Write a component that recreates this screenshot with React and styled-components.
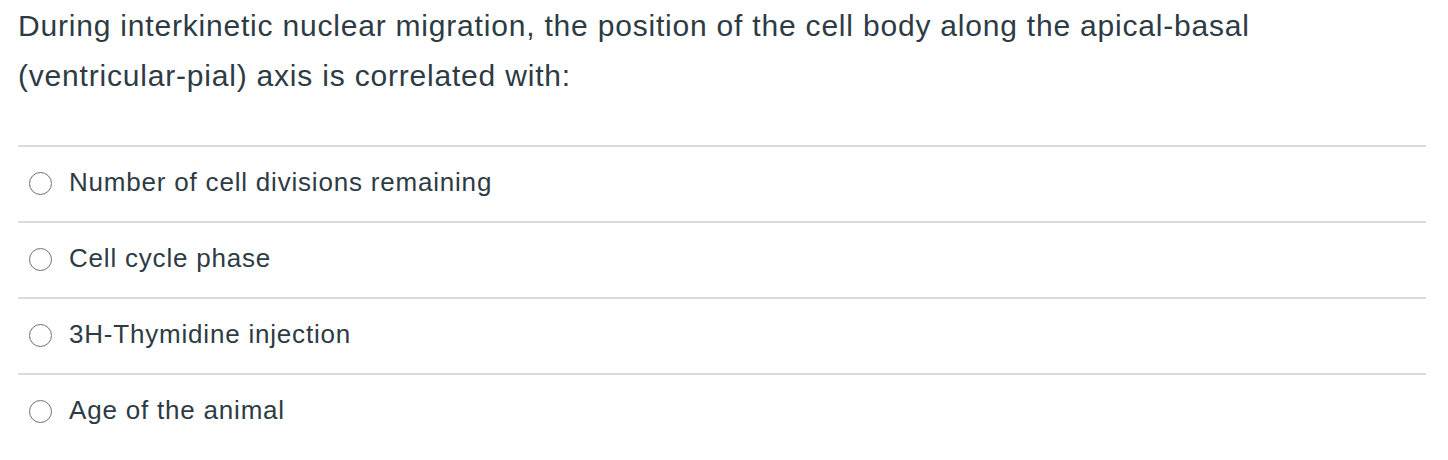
import React from 'react';
import styled, { createGlobalStyle } from 'styled-components';

const Global = createGlobalStyle`
  body {
    margin: 0;
    background: #fff;
    font-family: "Liberation Sans", Arial, sans-serif;
  }
`;

const Wrapper = styled.div`
  padding: 0 22px 0 18px;
  color: #2d3b45;
`;

const Question = styled.p`
  margin: 0;
  padding-top: 1px;
  font-size: 30px;
  letter-spacing: 0.8px;
  line-height: 50px;
  padding-bottom: 44px;
  border-bottom: 2px solid #dcdcdc;
`;

const Options = styled.div`
  display: flex;
  flex-direction: column;
`;

const Option = styled.label`
  display: flex;
  align-items: center;
  gap: 17px;
  height: 71px;
  padding: 0 0 3px 11px;
  font-size: 26px;
  letter-spacing: 0.8px;
  border-bottom: ${(p) => (p.last ? 'none' : '2px solid #dcdcdc')};
`;

const Radio = styled.span`
  width: 23px;
  height: 23px;
  margin-top: 2px;
  border: 1.8px solid #707070;
  border-radius: 50%;
  box-sizing: border-box;
  flex: none;
`;

const answers = [
  'Number of cell divisions remaining',
  'Cell cycle phase',
  '3H-Thymidine injection',
  'Age of the animal',
];

export default function App() {
  return (
    <Wrapper>
      <Global />
      <Question>
        During interkinetic nuclear migration, the position of the cell body along the apical-basal
        <br />
        (ventricular-pial) axis is correlated with:
      </Question>
      <Options>
        {answers.map((a, i) => (
          <Option key={a} last={i === answers.length - 1}>
            <Radio />
            {a}
          </Option>
        ))}
      </Options>
    </Wrapper>
  );
}
